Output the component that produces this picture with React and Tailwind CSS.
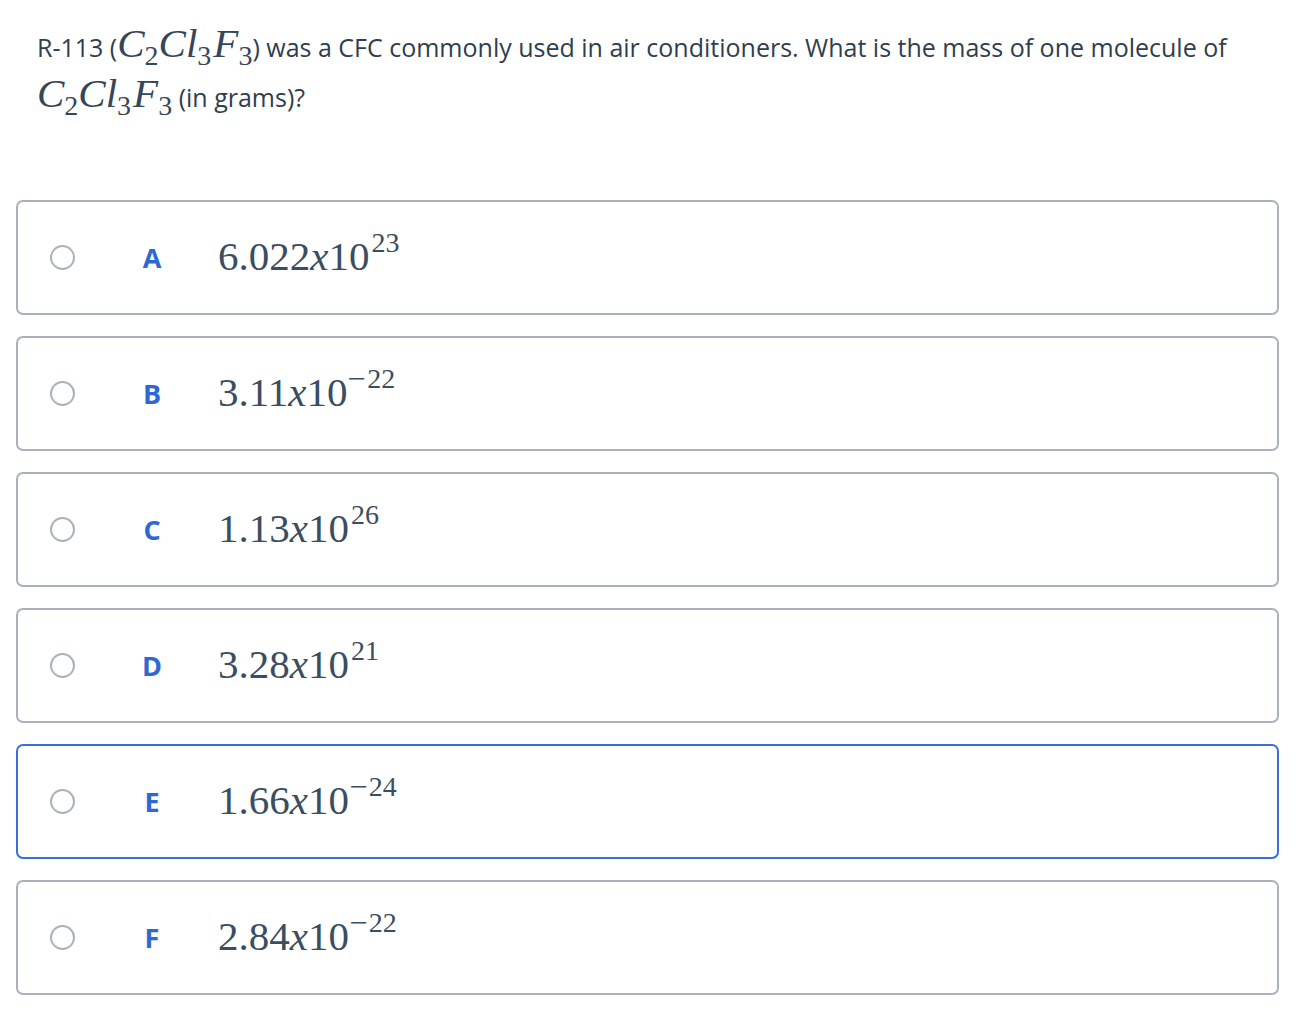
const options = [
  { letter: "A", mant: "6.022", exp: "23" },
  { letter: "B", mant: "3.11", exp: "22", neg: true },
  { letter: "C", mant: "1.13", exp: "26" },
  { letter: "D", mant: "3.28", exp: "21" },
  { letter: "E", mant: "1.66", exp: "24", neg: true, selected: true },
  { letter: "F", mant: "2.84", exp: "22", neg: true },
];

const mathFont = { fontFamily: '"Liberation Serif", "DejaVu Serif", serif' };

function Sub({ children }) {
  return <span className="align-[-8px] text-[28px] not-italic">{children}</span>;
}

function Formula() {
  return (
    <span className="text-[41px] leading-none text-[#34475a]" style={mathFont}>
      <i>C</i>
      <Sub>2</Sub>
      <i>Cl</i>
      <Sub>3</Sub>
      <i className="ml-[2px]">F</i>
      <Sub>3</Sub>
    </span>
  );
}

function Option({ letter, mant, exp, neg, selected }) {
  return (
    <div
      className={`flex h-[115px] items-center rounded-[7px] border-2 bg-white pl-[32px] ${
        selected ? "border-[#3a6fd6]" : "border-[#a9b2bc]"
      }`}
    >
      <span className="h-[25px] w-[25px] shrink-0 rounded-full border-2 border-[#a9b2bc]" />
      <span
        className="ml-[61px] w-[32px] text-center text-[27px] font-bold leading-none text-[#2e68d4]"
        style={{ fontFamily: '"Open Sans", "Noto Sans", sans-serif' }}
      >
        {letter}
      </span>
      <span className="mb-[9px] ml-[50px] text-[41px] leading-none text-[#3b4d60]" style={mathFont}>
        {mant}
        <i>x</i>
        10
        <span className="ml-[2px] align-[18px] text-[28px]">
          {neg && <span className="mr-[2px] inline-block scale-x-115">−</span>}
          {exp}
        </span>
      </span>
    </div>
  );
}

export default function App() {
  return (
    <div
      className="min-h-screen bg-white pl-4 pr-[21px] pt-[22px] text-[#2f3e4e]"
      style={{ fontFamily: '"Open Sans", "Noto Sans", sans-serif' }}
    >
      <p className="px-[21px] text-[25px] leading-[50px]">
        R-113 (<Formula />) was a CFC commonly used in air conditioners. What is the mass of one molecule of{" "}
        <Formula /> (in grams)?
      </p>

      <div className="mt-[78px] flex flex-col gap-[21px]">
        {options.map((o) => (
          <Option key={o.letter} {...o} />
        ))}
      </div>
    </div>
  );
}
